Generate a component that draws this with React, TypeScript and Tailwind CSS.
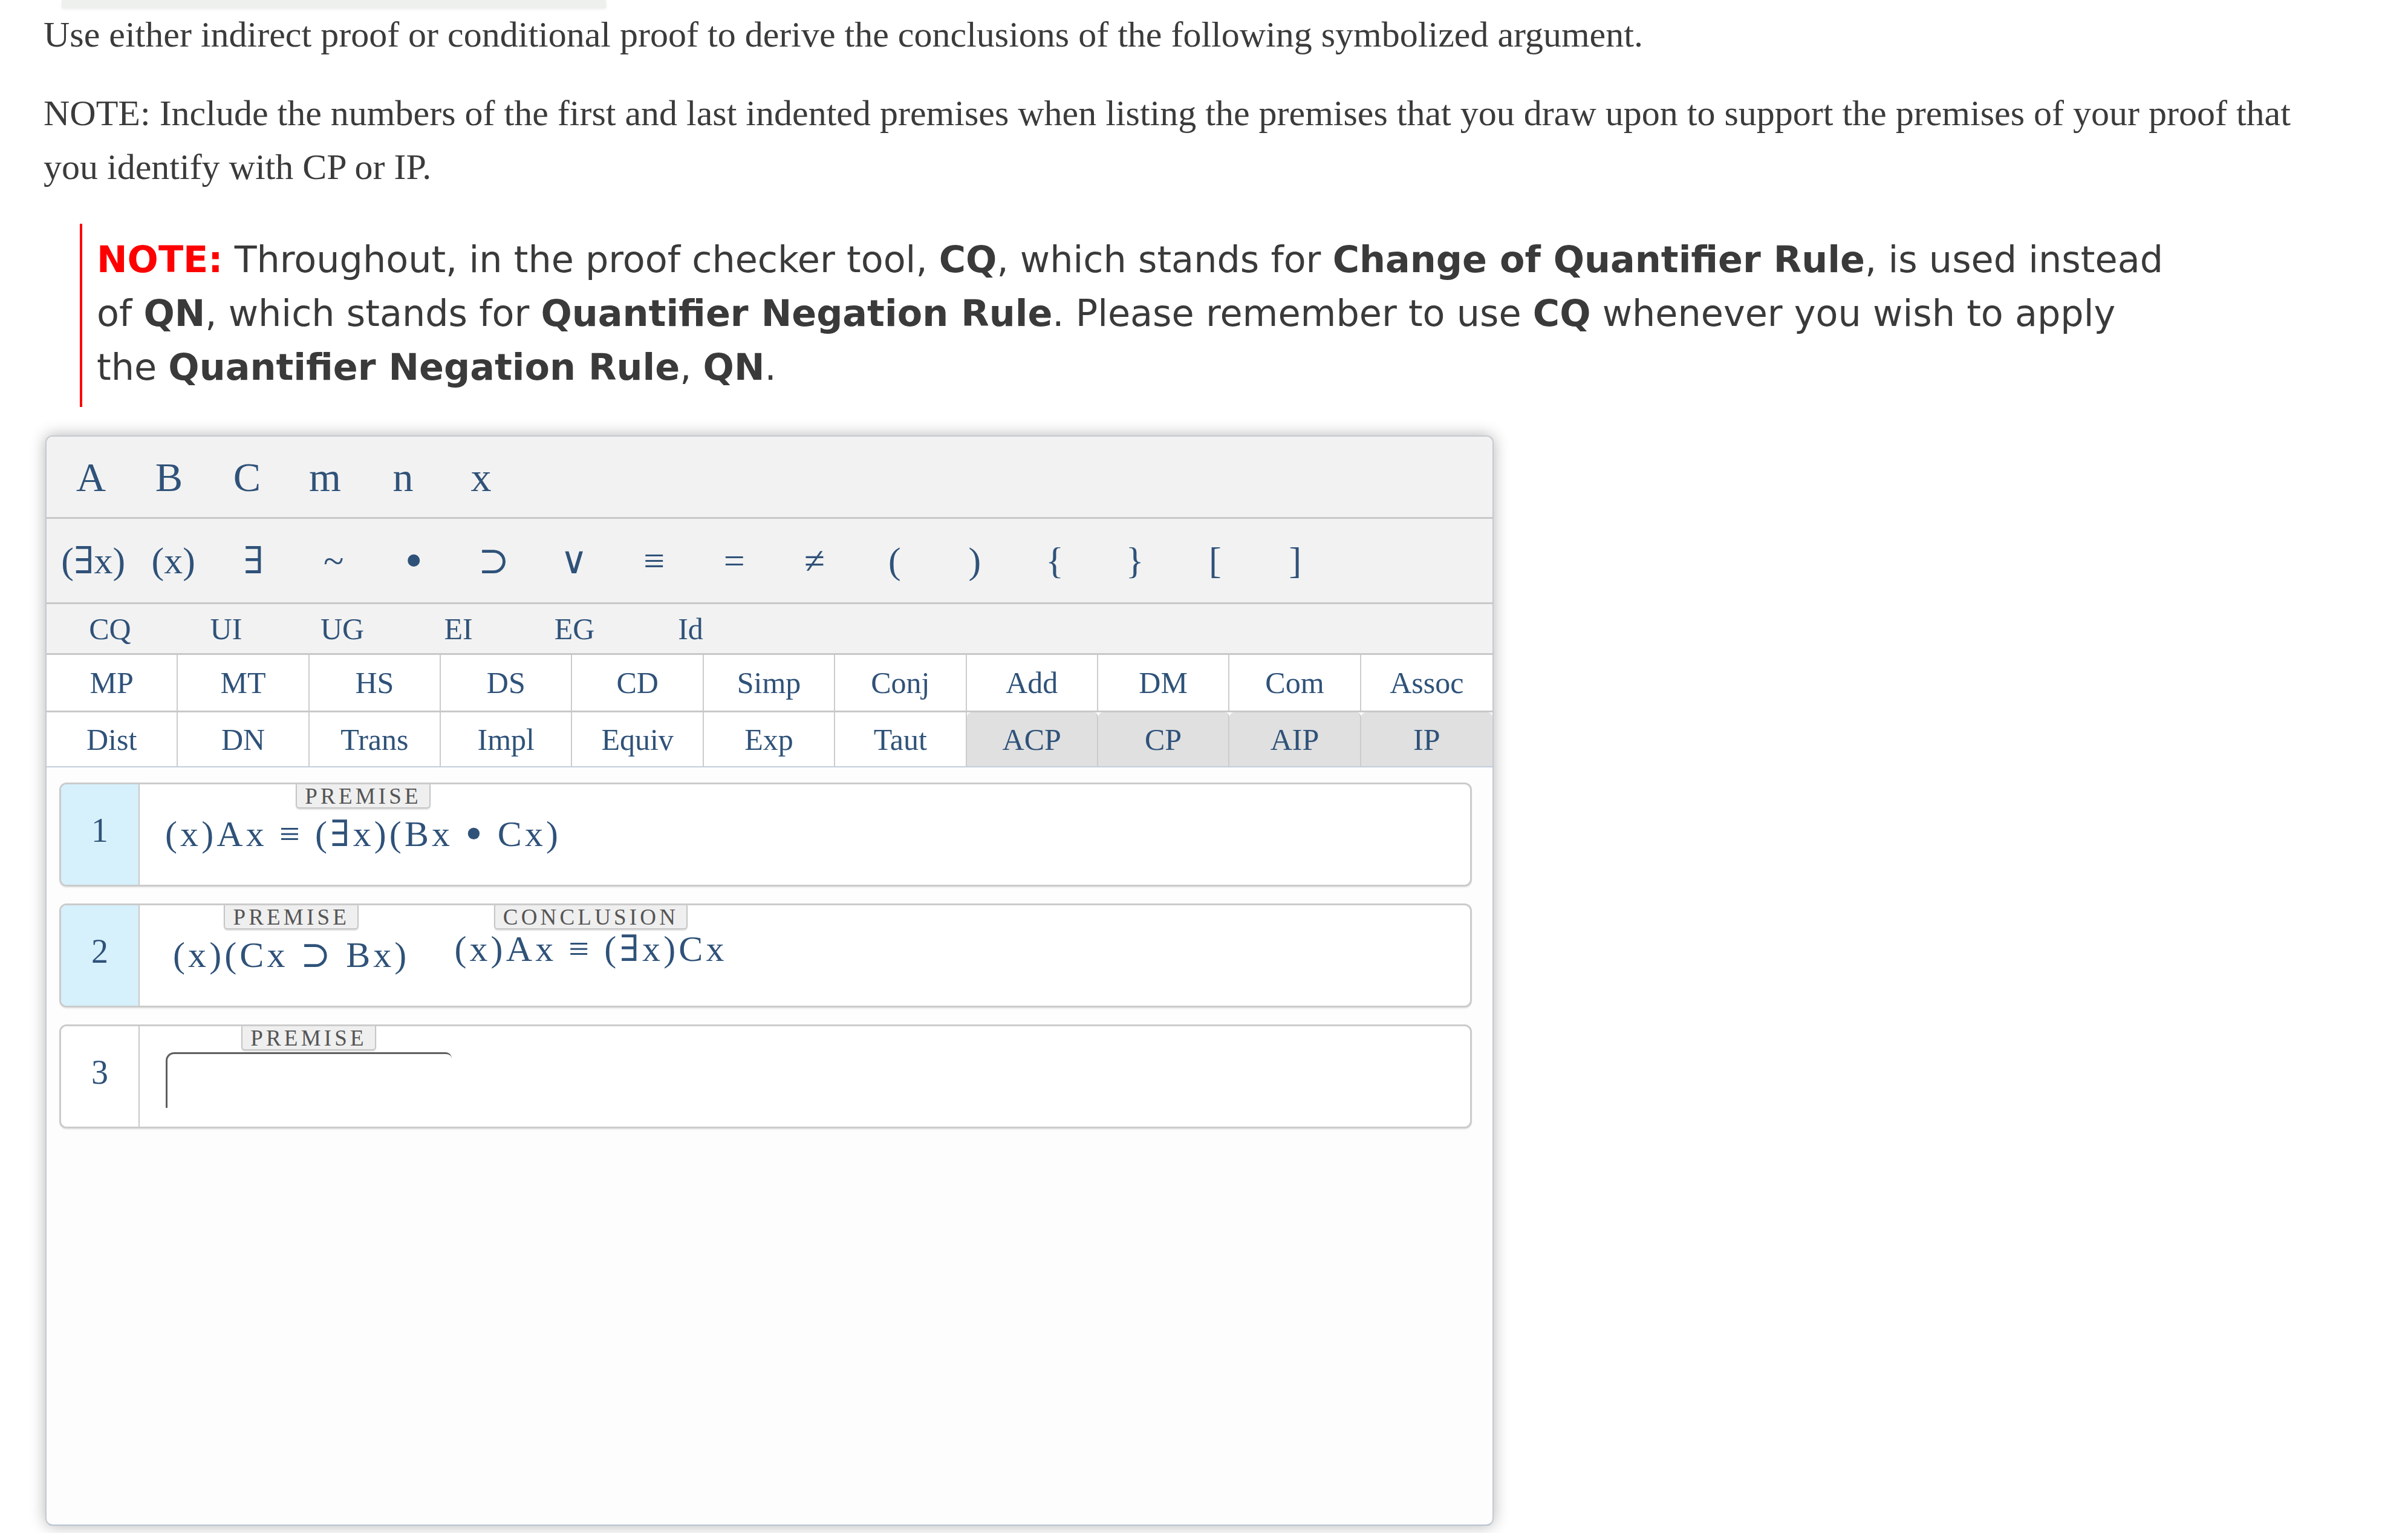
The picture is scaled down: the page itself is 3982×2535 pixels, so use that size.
import React from 'react';

const LETTERS = ['A', 'B', 'C', 'm', 'n', 'x'];
const SYMBOLS = ['(∃x)', '(x)', '∃', '~', '•', '⊃', '∨', '≡', '=', '≠', '(', ')', '{', '}', '[', ']'];
const QUANT_RULES = ['CQ', 'UI', 'UG', 'EI', 'EG', 'Id'];
const RULES_A = ['MP', 'MT', 'HS', 'DS', 'CD', 'Simp', 'Conj', 'Add', 'DM', 'Com', 'Assoc'];
const RULES_B = ['Dist', 'DN', 'Trans', 'Impl', 'Equiv', 'Exp', 'Taut', 'ACP', 'CP', 'AIP', 'IP'];
const SHADED = ['ACP', 'CP', 'AIP', 'IP'];

// the dot operator is drawn larger than the other glyphs
const withDot = (text: string) =>
  text.split('•').flatMap((part, i) =>
    i === 0 ? [part] : [<span key={i} className="text-[1.35em] leading-[0] align-[-0.08em]">•</span>, part]
  );

const Tag: React.FC<{ label: string }> = ({ label }) => (
  <div className="h-[40px] px-[13px] flex items-center bg-[#efefef] border-2 border-t-0 border-[#c6c6c6] rounded-b-[6px] shadow-[0_2px_2px_rgba(0,0,0,0.12)] text-[37px] leading-none tracking-[0.14em] text-[#555]">
    {label}
  </div>
);

const Formula: React.FC<{ label: string; text: string; lift?: boolean }> = ({ label, text, lift }) => (
  <div className="flex flex-col items-center">
    <Tag label={label} />
    <div className={`${lift ? 'mt-[0px]' : 'mt-[10px]'} text-[60px] leading-[64px] tracking-[0.085em] text-[#2f5279] whitespace-pre`}>
      {withDot(text)}
    </div>
  </div>
);

const ProofLine: React.FC<{ n: number; given: boolean; children: React.ReactNode }> = ({ n, given, children }) => (
  <div className="flex h-[172px] border-[3px] border-[#cbcbcb] rounded-[12px] overflow-hidden bg-white shadow-[0_2px_2px_rgba(0,0,0,0.08)]">
    <div className={`w-[130px] shrink-0 border-r-2 border-[#c8c8c8] flex justify-center pt-[48px] text-[56px] leading-none text-[#2f5279] ${given ? 'bg-[#d6f0fc]' : 'bg-white'}`}>
      {n}
    </div>
    <div className="flex items-start">{children}</div>
  </div>
);

export default function App() {
  return (
    <div className="min-h-screen bg-white text-[#3a3a3a] font-['Liberation_Serif','DejaVu_Serif',serif]">
      {/* scrolled-off element above */}
      <div className="ml-[102px] w-[900px] h-[13px] bg-[#eef0ed] shadow-[0_2px_4px_rgba(0,0,0,0.08)]" />

      <div className="pl-[72px] text-[60px] leading-[89px] text-[#3b3b3b]">
        <p>Use either indirect proof or conditional proof to derive the conclusions of the following symbolized argument.</p>
        <p className="mt-[41px]">
          NOTE: Include the numbers of the first and last indented premises when listing the premises that you draw upon to support the premises of your proof that
          <br />
          you identify with CP or IP.
        </p>
      </div>

      <div className="ml-[132px] mt-[49px] border-l-[4px] border-[#ff0000] pl-[24px] pt-[15px] pb-[21px] font-['DejaVu_Sans','Noto_Sans',sans-serif] text-[60.4px] leading-[89px] text-[#3a3a3a]">
        <span className="font-bold text-[#ff0000]">NOTE:</span> Throughout, in the proof checker tool, <b>CQ</b>, which stands for <b>Change of Quantifier Rule</b>, is used instead
        <br />
        of <b>QN</b>, which stands for <b>Quantifier Negation Rule</b>. Please remember to use <b>CQ</b> whenever you wish to apply
        <br />
        the <b>Quantifier Negation Rule</b>, <b>QN</b>.
      </div>

      {/* proof checker panel */}
      <div className="ml-[75px] mt-[47px] w-[2395px] h-[1803px] rounded-[12px] border-2 border-[#c4c9d0] border-b-[#b7c3d0] bg-[#fdfdfd] shadow-[0_0_26px_rgba(0,0,0,0.3)] overflow-hidden flex flex-col text-[#2f5279]">
        <div className="h-[136px] shrink-0 bg-[#f2f2f2] border-b-[3px] border-[#c8c8c8] flex items-center pl-[9px]">
          {LETTERS.map((l) => (
            <div key={l} className="w-[129px] text-center text-[68px] leading-none">{l}</div>
          ))}
        </div>
        <div className="h-[141px] shrink-0 bg-[#f2f2f2] border-b-[3px] border-[#c8c8c8] flex items-center pl-[11px]">
          {SYMBOLS.map((s, i) => (
            <div key={i} className={`w-[132.5px] text-center leading-none ${s === '•' ? 'text-[84px]' : 'text-[62px]'}`}>{s}</div>
          ))}
        </div>
        <div className="h-[84px] shrink-0 bg-[#f2f2f2] border-b-[3px] border-[#c8c8c8] flex items-center pl-[9px]">
          {QUANT_RULES.map((r) => (
            <div key={r} className="w-[192px] text-center text-[50px] leading-none">{r}</div>
          ))}
        </div>
        <div className="h-[95px] shrink-0 grid grid-cols-11 bg-white border-b-[3px] border-[#c8c8c8]">
          {RULES_A.map((r, i) => (
            <div key={r} className={`flex items-center justify-center text-[50px] leading-none ${i < 10 ? 'border-r-2 border-[#cccccc]' : ''}`}>{r}</div>
          ))}
        </div>
        <div className="h-[91px] shrink-0 grid grid-cols-11 bg-white border-b-2 border-[#c3cfdc]">
          {RULES_B.map((r, i) => (
            <div key={r} className={`flex items-center justify-center text-[50px] leading-none ${i < 10 ? 'border-r-2 border-[#cccccc]' : ''} ${SHADED.includes(r) ? 'bg-[#e0e0e0] rounded-t-[8px]' : ''}`}>{r}</div>
          ))}
        </div>

        <div className="flex flex-col gap-[28px] pl-[21px] pr-[34px] pt-[25px]">
          <ProofLine n={1} given>
            <div className="ml-[42px]">
              <Formula label="PREMISE" text="(x)Ax ≡ (∃x)(Bx • Cx)" />
            </div>
          </ProofLine>
          <ProofLine n={2} given>
            <div className="ml-[55px]">
              <Formula label="PREMISE" text="(x)(Cx ⊃ Bx)" />
            </div>
            <div className="ml-[74px]">
              <Formula label="CONCLUSION" text="(x)Ax ≡ (∃x)Cx" lift />
            </div>
          </ProofLine>
          <ProofLine n={3} given={false}>
            <div className="ml-[43px] flex flex-col items-center">
              <Tag label="PREMISE" />
              <div className="mt-[3px] w-[473px] h-[92px] border-t-[3px] border-l-[3px] border-[#5e5e5e] rounded-tl-[14px] rounded-tr-[10px]" />
            </div>
          </ProofLine>
        </div>
      </div>
    </div>
  );
}
